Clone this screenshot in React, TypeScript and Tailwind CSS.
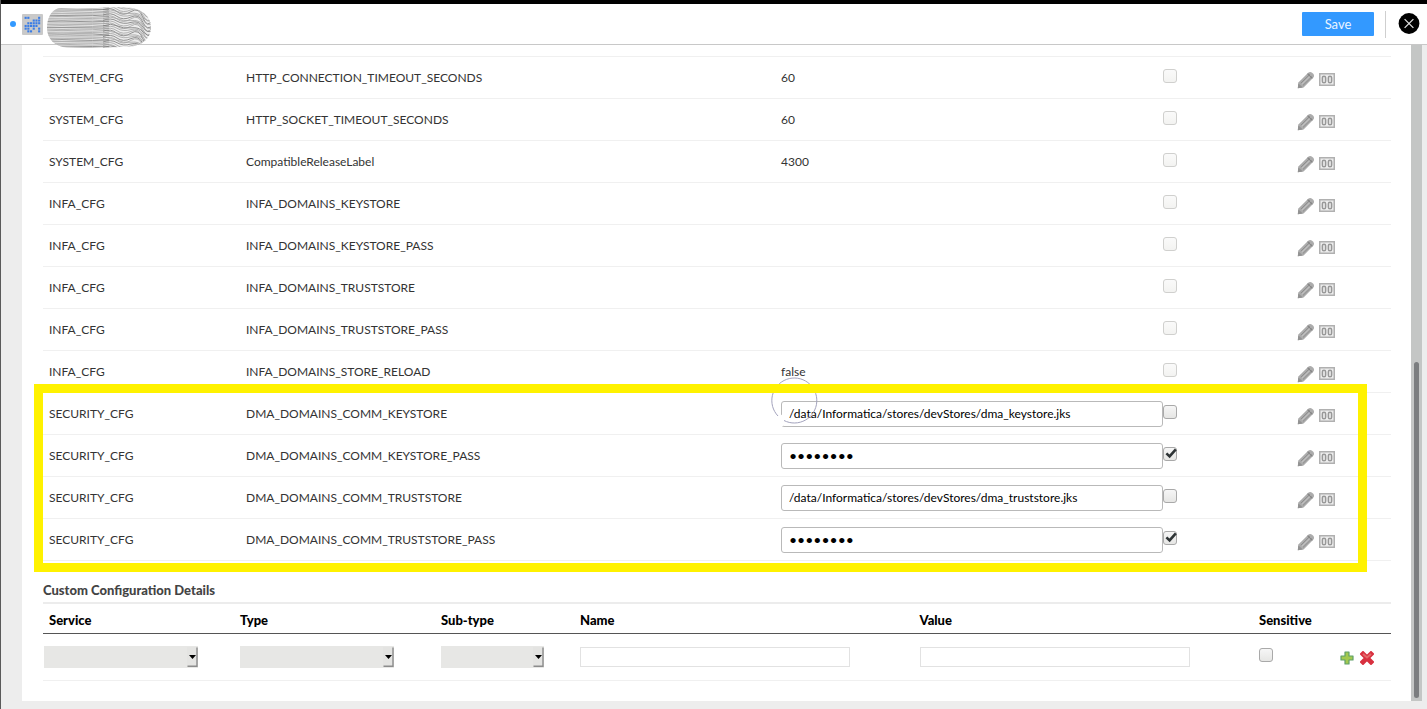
import React from "react";

type Row = { group: string; name: string; value?: string; kind?: "text" | "password"; sensitive?: boolean };

const rows: Row[] = [
  { group: "SYSTEM_CFG", name: "HTTP_CONNECTION_TIMEOUT_SECONDS", value: "60" },
  { group: "SYSTEM_CFG", name: "HTTP_SOCKET_TIMEOUT_SECONDS", value: "60" },
  { group: "SYSTEM_CFG", name: "CompatibleReleaseLabel", value: "4300" },
  { group: "INFA_CFG", name: "INFA_DOMAINS_KEYSTORE" },
  { group: "INFA_CFG", name: "INFA_DOMAINS_KEYSTORE_PASS" },
  { group: "INFA_CFG", name: "INFA_DOMAINS_TRUSTSTORE" },
  { group: "INFA_CFG", name: "INFA_DOMAINS_TRUSTSTORE_PASS" },
  { group: "INFA_CFG", name: "INFA_DOMAINS_STORE_RELOAD", value: "false" },
  { group: "SECURITY_CFG", name: "DMA_DOMAINS_COMM_KEYSTORE", value: "/data/Informatica/stores/devStores/dma_keystore.jks", kind: "text" },
  { group: "SECURITY_CFG", name: "DMA_DOMAINS_COMM_KEYSTORE_PASS", value: "••••••••", kind: "password", sensitive: true },
  { group: "SECURITY_CFG", name: "DMA_DOMAINS_COMM_TRUSTSTORE", value: "/data/Informatica/stores/devStores/dma_truststore.jks", kind: "text" },
  { group: "SECURITY_CFG", name: "DMA_DOMAINS_COMM_TRUSTSTORE_PASS", value: "••••••••", kind: "password", sensitive: true },
];

const logoDots = ["110001", "000111", "011111", "111110", "110101", "011001"];

function Logo() {
  return (
    <svg width="21" height="21" viewBox="0 0 21 21" aria-hidden="true">
      <rect width="21" height="21" rx="1" fill="#c9c9c9" />
      {logoDots.map((line, y) =>
        line.split("").map((c, x) =>
          c === "1" ? <rect key={`${x}-${y}`} x={2.6 + x * 2.7} y={2.8 + y * 2.7} width="2.1" height="2.1" fill="#3b7de6" /> : null,
        ),
      )}
    </svg>
  );
}

function Scribble() {
  const left = Array.from({ length: 27 }, (_, i) => {
    const y = 0.5 + i * 1.55;
    const w = (i % 3) * 0.6;
    return `M0 ${y} Q15 ${y - 0.8 + w} 30 ${y} T62 ${y + w}`;
  });
  const right = Array.from({ length: 32 }, (_, i) => {
    const y = -12 + i * 1.8;
    const w = (i % 4) * 0.7;
    return `M56 ${y + 2} Q64 ${y - 1} 70 ${y + 2 + w} T84 ${y + 4} T96 ${y + 8 + w} T106 ${y + 12}`;
  });
  return (
    <svg width="104" height="41" viewBox="0 0 104 41" aria-hidden="true">
      <defs>
        <clipPath id="blob">
          <path d="M14 1 C32 2 50 1 72 0 C92 -1 104 8 104 20 C104 32 94 40 80 39.5 C60 41 40 41.5 20 40.5 C8 40 0 32 0 21 C0 9 6 1 14 1Z" />
        </clipPath>
      </defs>
      <g clipPath="url(#blob)">
        <rect width="104" height="41" fill="#ececec" />
        {left.map((d, i) => (
          <path key={i} d={d} fill="none" stroke={i % 4 === 1 ? "#7a7a7a" : "#a2a2a2"} strokeWidth="0.8" />
        ))}
        {right.map((d, i) => (
          <path key={i} d={d} fill="none" stroke={i % 3 === 1 ? "#7a7a7a" : "#a2a2a2"} strokeWidth="0.8" />
        ))}
      </g>
    </svg>
  );
}

function Pencil() {
  return (
    <svg width="18" height="18" viewBox="0 0 18 18" aria-hidden="true">
      <path d="M0.8 17.2 L1.4 11.4 L11.2 1.8 Q13.2 0 15.4 2 L16 2.6 Q18 4.8 16.2 6.8 L6.6 16.4 Z" fill="#acacac" />
      <path d="M3.8 12.2 L12.8 3.4 M6 14.4 L15 5.6" fill="none" stroke="#8a8a8a" strokeWidth="0.9" />
      <path d="M4.9 13.3 L13.9 4.5" fill="none" stroke="#c6c6c6" strokeWidth="1" />
      <path d="M10.6 2.6 L15.4 7.4" stroke="#858585" strokeWidth="1.2" />
      <path d="M0.8 17.2 L1.3 12.2 L5.8 16.6 Z" fill="#929292" />
    </svg>
  );
}

function Counter() {
  return (
    <svg width="16" height="13" viewBox="0 0 16 13" aria-hidden="true">
      <rect x="0.75" y="0.75" width="14.5" height="11.5" fill="#ececec" stroke="#b0b0b0" strokeWidth="1.5" />
      <rect x="3.4" y="3.2" width="3.2" height="6.6" rx="1.6" fill="none" stroke="#989898" strokeWidth="1.5" />
      <rect x="9.4" y="3.2" width="3.2" height="6.6" rx="1.6" fill="none" stroke="#989898" strokeWidth="1.5" />
    </svg>
  );
}

function Check({ label, disabled, checked }: { label: string; disabled?: boolean; checked?: boolean }) {
  return (
    <span className="relative block size-[14px]">
      <input
        type="checkbox"
        aria-label={label}
        disabled={disabled}
        defaultChecked={checked}
        className="peer block size-[14px] appearance-none rounded-[3px] border border-[#a9a9a9] bg-linear-to-b from-[#f6f6f6] to-[#e6e6e4] disabled:border-[#d0d0ce] disabled:from-[#fafafa] disabled:to-[#f3f3f1]"
      />
      <svg className="pointer-events-none absolute inset-0 hidden peer-checked:block" width="14" height="14" viewBox="0 0 14 14" aria-hidden="true">
        <path d="M3.4 6.4 L6.6 9.4 L12.8 2.4" fill="none" stroke="#2e3436" strokeWidth="2.6" />
      </svg>
    </span>
  );
}

function Pick({ label, width }: { label: string; width: string }) {
  return (
    <span className={`relative block h-[22px] ${width}`}>
      <select aria-label={label} className="block h-full w-full appearance-none bg-[#e7e7e5]">
        <option></option>
      </select>
      <svg className="pointer-events-none absolute right-0 top-px" width="11" height="20" viewBox="0 0 11 20" aria-hidden="true">
        <rect width="11" height="20" fill="#e4e4e2" />
        <path d="M0.5 19.3 H10 V0.5" fill="none" stroke="#8c8c8c" strokeWidth="1.4" />
        <path d="M2 8 H9 L5.5 12 Z" fill="#000" />
      </svg>
    </span>
  );
}

export default function App() {
  return (
    <div className="flex min-h-screen flex-col border-l border-[#5a5a5a] bg-[#ededed] font-['Lato','Liberation_Sans',sans-serif] text-[13px] leading-4 text-[#333]">
      <header className="relative z-10 flex h-[45px] items-center border-b border-t-4 border-b-[#c8c8c8] border-t-black bg-white pl-[9px] pr-[7px]">
        <span className="size-[6px] rounded-full bg-[#3399ff]" />
        <span className="ml-[6px]"><Logo /></span>
        <span className="ml-[4px] mt-[6px]"><Scribble /></span>
        <button type="button" className="ml-auto h-6 w-[72px] rounded-[1px] bg-[#3399ff] text-[#eaf4ff]">Save</button>
        <span className="ml-[11px] h-[27px] w-px bg-[#cfcfcf]" />
        <button type="button" aria-label="Close" className="ml-[12px]">
          <svg width="22" height="22" viewBox="0 0 22 22" aria-hidden="true">
            <circle cx="11" cy="10.5" r="10.4" fill="#000" />
            <path d="M6.6 6.1 L15.4 14.9 M15.4 6.1 L6.6 14.9" stroke="#ddd" strokeWidth="1.3" />
          </svg>
        </button>
      </header>

      <div className="flex flex-1 pb-2 pl-[21px] pr-[5px]">
        <main className="min-w-0 flex-1 bg-white pb-5 pl-[21px] pr-[20px] pt-[11px]">
          <div className="relative">
            <table className="w-full table-fixed border-collapse border-t border-[#f0f0f0] text-xs">
              <colgroup>
                <col className="w-[197px]" />
                <col />
                <col className="w-[388px]" />
                <col className="w-[134px]" />
                <col className="w-[94px]" />
              </colgroup>
              <tbody>
                {rows.map((r) => (
                  <tr key={r.name} className="h-[42px] border-b border-[#f0f0f0]">
                    <td className="pl-[6px]">{r.group}</td>
                    <td className="pl-[6px]">{r.name}</td>
                    <td className="relative pl-[6px]">
                      {r.kind ? (
                        <input
                          type={r.kind}
                          aria-label={r.name}
                          defaultValue={r.value}
                          className={`block h-[26px] w-full rounded-[3px] border border-[#b9b9b9] bg-white px-[7px] text-black ${r.kind === "password" ? "text-sm" : "text-xs"}`}
                        />
                      ) : (
                        r.value
                      )}
                      {r.name === "DMA_DOMAINS_COMM_KEYSTORE" && (
                        <svg className="pointer-events-none absolute -left-[5px] -top-[17px]" width="48" height="54" viewBox="0 0 48 54" aria-hidden="true">
                          <path d="M9 37 V50 H13 V40 Z" fill="#fff" />
                          <path d="M8 40 A22.5 22.5 0 1 1 14 44.5" fill="none" stroke="#a3a3bd" strokeWidth="1" />
                        </svg>
                      )}
                    </td>
                    <td className="pb-1">
                      <Check label={`${r.name} sensitive`} disabled={!r.kind} checked={r.sensitive} />
                    </td>
                    <td className="pt-1">
                      <div className="flex items-center gap-1">
                        <button type="button" aria-label="Edit"><Pencil /></button>
                        <button type="button" aria-label="Reset"><Counter /></button>
                      </div>
                    </td>
                  </tr>
                ))}
              </tbody>
            </table>
            <div className="pointer-events-none absolute -bottom-[11px] -left-[9px] right-6 h-[188px] border-[9px] border-[#fff200]" />
          </div>

          <h2 className="mt-[21px] border-b-2 border-[#ececec] pb-1 font-black text-[#444]">Custom Configuration Details</h2>
          <table className="w-full table-fixed border-collapse">
            <colgroup>
              <col className="w-[197px]" />
              <col className="w-[201px]" />
              <col className="w-[139px]" />
              <col />
              <col />
              <col className="w-[81px]" />
              <col className="w-[51px]" />
            </colgroup>
            <thead>
              <tr className="h-[29px] border-b border-[#555] text-left font-black text-black">
                <th className="pl-[6px] pt-1 font-black">Service</th>
                <th className="pt-1 font-black">Type</th>
                <th className="pt-1 font-black">Sub-type</th>
                <th className="pt-1 font-black">Name</th>
                <th className="pt-1 font-black">Value</th>
                <th className="pt-1 font-black">Sensitive</th>
                <td></td>
              </tr>
            </thead>
            <tbody>
              <tr className="h-[47px] border-b border-[#f0f0f0]">
                <td className="pl-px"><Pick label="Service" width="w-[154px]" /></td>
                <td><Pick label="Type" width="w-[154px]" /></td>
                <td><Pick label="Sub-type" width="w-[103px]" /></td>
                <td><input type="text" aria-label="Name" className="block h-5 w-[270px] border border-[#e2e2e2] px-1" /></td>
                <td><input type="text" aria-label="Value" className="block h-5 w-[270px] border border-[#e2e2e2] px-1" /></td>
                <td className="pb-1"><Check label="Sensitive" /></td>
                <td>
                  <div className="flex items-center gap-[6px] pt-[2px]">
                    <button type="button" aria-label="Add">
                      <svg width="14" height="14" viewBox="0 0 14 14" aria-hidden="true">
                        <path d="M5 1 H9 V5 H13 V9 H9 V13 H5 V9 H1 V5 H5 Z" fill="#a3c94f" stroke="#5f9f68" strokeWidth="1.2" strokeLinejoin="round" />
                      </svg>
                    </button>
                    <button type="button" aria-label="Remove">
                      <svg width="14" height="14" viewBox="0 0 14 14" aria-hidden="true">
                        <path d="M3 3 L11 11 M11 3 L3 11" stroke="#d8303f" strokeWidth="4.8" strokeLinecap="square" />
                        <path d="M3 3 L7 6.5 L11 3" fill="none" stroke="#e4696a" strokeWidth="2" />
                      </svg>
                    </button>
                  </div>
                </td>
              </tr>
            </tbody>
          </table>
        </main>
        <div className="flex w-[11px] flex-col items-center justify-end bg-[#c4c6c5] pb-[3px]">
          <div className="h-[336px] w-[5px] rounded-full bg-[#7b7d7f]" />
        </div>
      </div>
    </div>
  );
}
